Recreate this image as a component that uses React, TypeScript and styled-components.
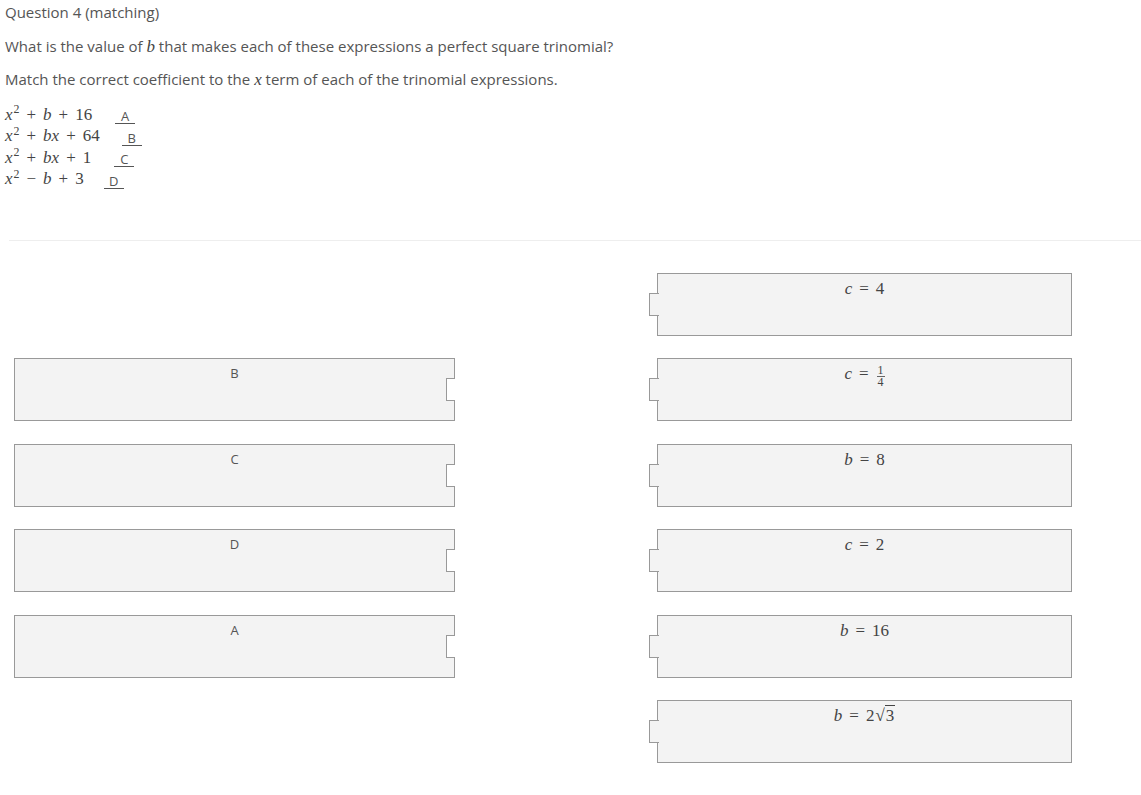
import React from "react";
import styled, { createGlobalStyle } from "styled-components";

const GlobalStyle = createGlobalStyle`
  html, body {
    margin: 0;
    padding: 0;
    background: #ffffff;
  }
  body {
    font-family: "Open Sans", "Liberation Sans", sans-serif;
    color: #555555;
  }
`;

const Page = styled.div`
  width: 1141px;
  height: 795px;
  overflow: hidden;
`;

const Header = styled.div`
  padding: 3px 0 0 5px;
  font-size: 15px;
  line-height: 18px;
`;

const Title = styled.div`
  margin: 0;
`;

const Para = styled.p<{ $top: number }>`
  margin: ${(p) => p.$top}px 0 0;
`;

const MathText = styled.span`
  font-family: "Liberation Serif", "DejaVu Serif", serif;
  color: #444444;
  font-size: 17px;
`;

const V = styled.span`
  font-style: italic;
`;

const Sup = styled.sup`
  font-size: 0.7em;
  line-height: 0;
  vertical-align: 0.55em;
  margin-left: 1px;
`;

const Op = styled.span`
  margin: 0 7px;
`;

const FormulaList = styled.div`
  margin-top: 15px;
  display: flex;
  flex-direction: column;
`;

const FormulaRow = styled.div`
  display: flex;
  align-items: center;
  height: 21.5px;
`;

const Blank = styled.span<{ $gap: number }>`
  margin-left: ${(p) => p.$gap}px;
  padding: 0 5px;
  min-width: 10px;
  border-bottom: 1px solid #555555;
  font-size: 13px;
  line-height: 14px;
  color: #555555;
  text-align: center;
  transform: translateY(2px);
`;

const Divider = styled.hr`
  margin: 50px 0 0 9px;
  border: none;
  border-top: 1px solid #eeeeee;
`;

const Board = styled.div`
  margin: 32px 0 0 14px;
  display: grid;
  grid-template-columns: 441px 415px;
  column-gap: 202px;
  align-items: start;
`;

const Column = styled.div<{ $offset: number }>`
  display: flex;
  flex-direction: column;
  gap: 22.4px;
  padding-top: ${(p) => p.$offset}px;
`;

const Card = styled.div<{ $pad: number }>`
  position: relative;
  box-sizing: border-box;
  height: 63px;
  background: #f3f3f3;
  border: 1px solid #999999;
  text-align: center;
  padding-top: ${(p) => p.$pad}px;
  line-height: 20px;
`;

const Notch = styled.div`
  position: absolute;
  right: -1px;
  top: 19px;
  box-sizing: border-box;
  width: 9px;
  height: 23px;
  background: #ffffff;
  border: 1px solid #999999;
  border-right: none;
`;

const Tab = styled.div`
  position: absolute;
  left: -9px;
  top: 19px;
  box-sizing: border-box;
  width: 10px;
  height: 23px;
  background: #f3f3f3;
  border: 1px solid #999999;
  border-right: none;
`;

const Letter = styled.span`
  font-family: "Open Sans", "Liberation Sans", sans-serif;
  font-size: 13px;
  color: #555555;
`;

const Frac = styled.span`
  display: inline-flex;
  flex-direction: column;
  align-items: center;
  vertical-align: middle;
  font-size: 12px;
  line-height: 11px;
  margin-left: 1px;
  transform: translateY(1px);
`;

const FracTop = styled.span`
  border-bottom: 1px solid #666666;
  padding: 0 1px;
`;

const Radical = styled.span`
  margin-left: 1px;
`;

const Radicand = styled.span`
  border-top: 1px solid #444444;
  padding: 0 1px;
`;

type Expr = { parts: React.ReactNode; blank: string; gap: number };

const formulas: Expr[] = [
  {
    parts: (
      <>
        <V>x</V>
        <Sup>2</Sup>
        <Op>+</Op>
        <V>b</V>
        <Op>+</Op>16
      </>
    ),
    blank: "A",
    gap: 23,
  },
  {
    parts: (
      <>
        <V>x</V>
        <Sup>2</Sup>
        <Op>+</Op>
        <V>bx</V>
        <Op>+</Op>64
      </>
    ),
    blank: "B",
    gap: 22,
  },
  {
    parts: (
      <>
        <V>x</V>
        <Sup>2</Sup>
        <Op>+</Op>
        <V>bx</V>
        <Op>+</Op>1
      </>
    ),
    blank: "C",
    gap: 23,
  },
  {
    parts: (
      <>
        <V>x</V>
        <Sup>2</Sup>
        <Op>−</Op>
        <V>b</V>
        <Op>+</Op>3
      </>
    ),
    blank: "D",
    gap: 20,
  },
];

const leftItems = ["B", "C", "D", "A"];

const rightItems: React.ReactNode[] = [
  <>
    <V>c</V>
    <Op>=</Op>4
  </>,
  <>
    <V>c</V>
    <Op>=</Op>
    <Frac>
      <FracTop>1</FracTop>
      <span>4</span>
    </Frac>
  </>,
  <>
    <V>b</V>
    <Op>=</Op>8
  </>,
  <>
    <V>c</V>
    <Op>=</Op>2
  </>,
  <>
    <V>b</V>
    <Op>=</Op>16
  </>,
  <>
    <V>b</V>
    <Op>=</Op>2
    <Radical>√</Radical>
    <Radicand>3</Radicand>
  </>,
];

export default function App() {
  return (
    <Page>
      <GlobalStyle />
      <Header>
        <Title>Question 4 (matching)</Title>
        <Para $top={16}>
          What is the value of{" "}
          <MathText>
            <V>b</V>
          </MathText>{" "}
          that makes each of these expressions a perfect square trinomial?
        </Para>
        <Para $top={14}>
          Match the correct coefficient to the{" "}
          <MathText>
            <V>x</V>
          </MathText>{" "}
          term of each of the trinomial expressions.
        </Para>
        <FormulaList>
          {formulas.map((f) => (
            <FormulaRow key={f.blank}>
              <MathText>{f.parts}</MathText>
              <Blank $gap={f.gap}>{f.blank}</Blank>
            </FormulaRow>
          ))}
        </FormulaList>
      </Header>
      <Divider />
      <Board>
        <Column $offset={85.4}>
          {leftItems.map((l) => (
            <Card key={l} $pad={3}>
              <Letter>{l}</Letter>
              <Notch />
            </Card>
          ))}
        </Column>
        <Column $offset={0}>
          {rightItems.map((r, i) => (
            <Card key={i} $pad={4}>
              <MathText>{r}</MathText>
              <Tab />
            </Card>
          ))}
        </Column>
      </Board>
    </Page>
  );
}
